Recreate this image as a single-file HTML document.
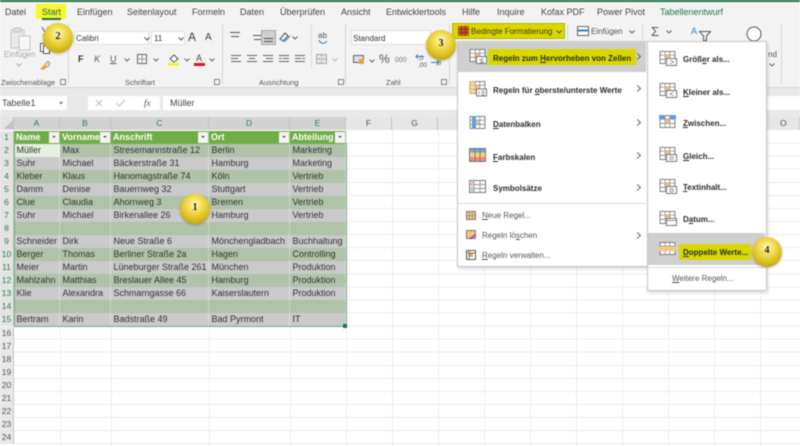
<!DOCTYPE html>
<html lang="de"><head><meta charset="utf-8"><title>Excel</title>
<style>
html,body{margin:0;padding:0}
body{width:800px;height:446px;overflow:hidden;position:relative;background:#fff;font-family:"Liberation Sans",sans-serif;font-size:9px;color:#333}
#w{position:absolute;left:0;top:0;width:800px;height:446px;overflow:hidden;filter:blur(.5px)}
.a{position:absolute;white-space:nowrap}
.bx{position:absolute}
.tab{position:absolute;top:7px;font-size:9px;color:#444;white-space:nowrap;line-height:11px}
.lab{position:absolute;top:78px;font-size:7.5px;color:#555;white-space:nowrap;line-height:10px}
.sep{position:absolute;top:24px;width:1px;height:60px;background:#d6d6d6}
#sheet{position:absolute;left:0;top:117px;width:800px;height:329px;background-color:#fff;
background-image:repeating-linear-gradient(to bottom,transparent 0,transparent 12.07px,#ececec 12.07px,#ececec 13.07px);background-position:0 13.5px}
.v{position:absolute;top:117px;bottom:0;width:1px;background:#eeeeee}
.ch{position:absolute;top:117px;height:13px;background:#e6e6e6;border-right:1px solid #c4c4c4;box-sizing:border-box;text-align:center;font-size:8.5px;line-height:13px;color:#555}
.ch.s{background:#d2d2d2;color:#2f7d4f}
.rows{position:absolute;left:0;top:130.5px;width:346px}
.r{height:13.07px;display:grid;grid-template-columns:14px 46px 51px 98px 81px 56px;font-size:9px;line-height:13px;color:#333}
.r>i{font-style:normal;overflow:visible;white-space:nowrap;padding-left:2.5px;border-right:1px solid rgba(255,255,255,.35);box-sizing:border-box}
.r>b{font-weight:normal;text-align:center;background:#e3e3e3;font-size:8.5px;color:#2f7d4f;border-right:1px solid #c4c4c4;box-sizing:border-box}
.g>i{background:#b0c2a8}.y>i{background:#cacaca}
.h>i{background:#70ad47;color:#fff;font-weight:bold;position:relative;padding-left:2px}
.h>i u{position:absolute;right:0;top:1px;width:10px;height:11px;background:#f3f3f3;text-decoration:none}
.h>i u:after{content:"";position:absolute;left:3px;top:4.5px;border:2px solid transparent;border-top:2.5px solid #555}
.rh{position:absolute;left:0;width:14px;height:13.07px;background:#e8e8e8;text-align:center;font-size:8.5px;line-height:13px;color:#555;border-right:1px solid #c4c4c4;box-sizing:border-box}
.menu{position:absolute;background:#fff;border:1px solid #c6c6c6;box-sizing:border-box;box-shadow:1px 2px 3px rgba(0,0,0,.15)}
.mi{position:absolute;font-size:8px;font-weight:bold;color:#2b2b2b;white-space:nowrap;line-height:11px}
.ms{position:absolute;font-size:8px;color:#555;white-space:nowrap;line-height:11px}
.chev{position:absolute;width:4px;height:4px;border-top:1px solid #666;border-right:1px solid #666;transform:rotate(45deg)}
.badge{position:absolute;width:30px;height:30px;border-radius:50%;background:radial-gradient(circle at 50% 35%,#fff8c0 0,#f3df5a 28%,#dcbf1f 60%,#a88d0c 100%);text-align:center;font:bold 10px/28px "Liberation Serif",serif;color:#222;box-shadow:0 1px 2px rgba(0,0,0,.25)}
svg{position:absolute;overflow:visible}
</style></head><body><div id="w">

<svg width="0" height="0" style="position:absolute"><defs>
<symbol id="g" viewBox="0 0 17 14"><rect x=".5" y=".5" width="16" height="13" fill="#fff" stroke="#777"/><rect x="6" y="4.5" width="5" height="4.5" fill="#f8c67a"/><path d="M.5 4.5H16.5M.5 9H16.5M6 .5V13.5M11 .5V13.5" stroke="#999" fill="none"/></symbol>
<symbol id="sub" viewBox="0 0 11 8"><rect x=".5" y=".5" width="10" height="7" fill="#fff" stroke="#777"/></symbol>
</defs></svg>

<!-- top / tabs -->
<div class="bx" style="left:0;top:0;width:800px;height:1.5px;background:#217346"></div>
<div class="bx" style="left:0;top:1.5px;width:800px;height:20px;background:#f3f3f3"></div>
<div class="bx" style="left:36px;top:4px;width:30px;height:15px;background:#f7f730"></div>
<div class="tab" style="left:5px">Datei</div>
<div class="tab" style="left:42px;color:#1f5f3a">Start</div>
<div class="bx" style="left:42px;top:18px;width:19px;height:1.5px;background:#217346"></div>
<div class="tab" style="left:77px">Einfügen</div>
<div class="tab" style="left:127px">Seitenlayout</div>
<div class="tab" style="left:192px">Formeln</div>
<div class="tab" style="left:240px">Daten</div>
<div class="tab" style="left:280px">Überprüfen</div>
<div class="tab" style="left:341px">Ansicht</div>
<div class="tab" style="left:386px">Entwicklertools</div>
<div class="tab" style="left:462px">Hilfe</div>
<div class="tab" style="left:497px">Inquire</div>
<div class="tab" style="left:541px">Kofax PDF</div>
<div class="tab" style="left:597px">Power Pivot</div>
<div class="tab" style="left:660px;color:#217346">Tabellenentwurf</div>

<!-- ribbon -->
<div class="bx" style="left:0;top:21px;width:800px;height:67px;background:#f3f3f3;border-bottom:1px solid #d6d6d6;box-sizing:border-box"></div>
<div class="sep" style="left:68px"></div><div class="sep" style="left:222px"></div><div class="sep" style="left:345px"></div><div class="sep" style="left:449px"></div><div class="sep" style="left:567px;height:22px"></div><div class="sep" style="left:642px;height:22px"></div><div class="sep" style="left:781px"></div>

<svg style="left:10px;top:27px" width="22" height="24" viewBox="0 0 22 24"><rect x="1" y="3" width="13" height="18" fill="#e9e9e9" stroke="#c4c4c4"/><rect x="4" y="1" width="7" height="4" fill="#ddd" stroke="#c4c4c4"/><rect x="9" y="9" width="11" height="14" fill="#f7f7f7" stroke="#c4c4c4"/></svg>
<div class="a" style="left:4px;top:50px;font-size:8px;color:#aaa">Einfügen</div>
<svg style="left:16px;top:63px" width="6" height="4"><path d="M.5 .5L3 3L5.5 .5" stroke="#aaa" fill="none"/></svg>
<svg style="left:40px;top:43px" width="10" height="11"><rect x=".5" y=".5" width="6" height="8" fill="#fff" stroke="#555"/><rect x="3.5" y="2.5" width="6" height="8" fill="#fff" stroke="#555"/></svg>
<svg style="left:39px;top:60px" width="12" height="11"><path d="M1 9L6 4L9 7L4 10Z" fill="#eda13e"/><path d="M6 4L9 1L11 3L9 7" fill="#ddd" stroke="#777" stroke-width=".6"/></svg>
<svg style="left:41px;top:26px" width="8" height="12"><path d="M1 1L6 10M7 1L2 10" stroke="#2c6fb3" fill="none"/></svg>
<div class="lab" style="left:1px">Zwischenablage</div>
<div class="bx" style="left:60px;top:79px;width:6px;height:6px;border:1px solid #888;box-sizing:border-box"></div>

<div class="bx" style="left:74px;top:31px;width:75px;height:14px;background:#fff;border:1px solid #e0e0e0;box-sizing:border-box"></div>
<div class="a" style="left:76px;top:33px;font-size:8px;color:#333;line-height:11px">Calibri</div>
<svg style="left:144px;top:37px" width="6" height="4"><path d="M.5 .5L3 3L5.5 .5" stroke="#555" fill="none"/></svg>
<div class="bx" style="left:151px;top:31px;width:34px;height:14px;background:#fff;border:1px solid #e0e0e0;box-sizing:border-box"></div>
<div class="a" style="left:154px;top:33px;font-size:8px;color:#333;line-height:11px">11</div>
<svg style="left:178px;top:37px" width="6" height="4"><path d="M.5 .5L3 3L5.5 .5" stroke="#555" fill="none"/></svg>
<div class="a" style="left:188px;top:30px;font-size:12px;color:#444;line-height:14px">A</div><div class="a" style="left:205px;top:32px;font-size:10px;color:#444;line-height:12px">A</div>
<div class="a" style="left:78px;top:54px;font-weight:bold;font-size:9px;color:#333;line-height:11px">F</div>
<div class="a" style="left:94px;top:54px;font-style:italic;font-size:9px;color:#555;line-height:11px">K</div>
<div class="a" style="left:110px;top:54px;text-decoration:underline;font-size:9px;color:#555;line-height:11px">U</div>
<svg style="left:124px;top:58px" width="6" height="4"><path d="M.5 .5L3 3L5.5 .5" stroke="#666" fill="none"/></svg>
<svg style="left:137px;top:54px" width="11" height="11"><rect x=".5" y=".5" width="9" height="9" fill="none" stroke="#666"/><path d="M5 .5V9.5M.5 5H9.5" stroke="#999"/></svg>
<svg style="left:153px;top:58px" width="6" height="4"><path d="M.5 .5L3 3L5.5 .5" stroke="#666" fill="none"/></svg>
<svg style="left:168px;top:53px" width="12" height="13"><path d="M6 2L10 6L6 9L2 6Z" fill="#fff" stroke="#555"/><rect y="10" width="11" height="2.5" fill="#f5f01e"/></svg>
<svg style="left:184px;top:58px" width="6" height="4"><path d="M.5 .5L3 3L5.5 .5" stroke="#666" fill="none"/></svg>
<div class="a" style="left:196px;top:53px;font-size:9px;color:#444;line-height:10px">A</div><div class="bx" style="left:194px;top:63px;width:11px;height:2.5px;background:#e8112d"></div>
<svg style="left:209px;top:58px" width="6" height="4"><path d="M.5 .5L3 3L5.5 .5" stroke="#666" fill="none"/></svg>
<div class="lab" style="left:125px">Schriftart</div>
<div class="bx" style="left:214px;top:79px;width:6px;height:6px;border:1px solid #888;box-sizing:border-box"></div>

<svg style="left:229px;top:30px" width="70" height="14"><path d="M1 2.5H11M2 6.5H10M24 5.5H34M25 9.5H33" stroke="#555" fill="none"/></svg>
<div class="bx" style="left:261px;top:30px;width:15px;height:15px;background:#cfcfcf;border:1px solid #a8a8a8;box-sizing:border-box"></div>
<svg style="left:264px;top:36px" width="10" height="7"><path d="M0 2.5H9M0 5.5H9" stroke="#555"/></svg>
<svg style="left:279px;top:31px" width="12" height="12"><path d="M1 8L6 2L9 5L4 10Z" fill="none" stroke="#555"/><path d="M5 11L11 5" stroke="#2c7fc9"/></svg>
<svg style="left:292px;top:36px" width="6" height="4"><path d="M.5 .5L3 3L5.5 .5" stroke="#666" fill="none"/></svg>
<svg style="left:231px;top:54px" width="76" height="10"><path d="M0 1.5H10M0 4.5H7M0 7.5H10M16 1.5H26M18 4.5H24M16 7.5H26M32 1.5H42M35 4.5H42M32 7.5H42" stroke="#666" fill="none"/><path d="M48 1.5H58M52 4.5H58M48 7.5H58M64 1.5H74M64 4.5H70M64 7.5H74" stroke="#666" fill="none"/><path d="M48 4.5H51M71 4.5H74" stroke="#2c7fc9"/></svg>
<div class="bx" style="left:311px;top:24px;width:1px;height:44px;background:#dcdcdc"></div>
<div class="a" style="left:318px;top:31px;font-size:8px;color:#555;line-height:9px">ab</div>
<svg style="left:318px;top:39px" width="10" height="6"><path d="M1 1C2 5 7 5 9 2" stroke="#2c7fc9" fill="none"/></svg>
<svg style="left:316px;top:54px" width="11" height="10"><rect x=".5" y=".5" width="10" height="9" fill="#e4e4e4" stroke="#aaa"/><path d="M5.5 .5V3M5.5 7V9.5M.5 5H10.5" stroke="#aaa"/></svg>
<svg style="left:332px;top:58px" width="6" height="4"><path d="M.5 .5L3 3L5.5 .5" stroke="#bbb" fill="none"/></svg>
<div class="lab" style="left:259px">Ausrichtung</div>
<div class="bx" style="left:338px;top:79px;width:6px;height:6px;border:1px solid #888;box-sizing:border-box"></div>

<div class="bx" style="left:351px;top:30px;width:80px;height:15px;background:#fff;border:1px solid #e0e0e0;box-sizing:border-box"></div>
<div class="a" style="left:353px;top:33px;font-size:8px;color:#333;line-height:11px">Standard</div>
<svg style="left:353px;top:55px" width="12" height="10"><rect x=".5" y=".5" width="10" height="7" fill="#ddd" stroke="#666"/><rect x="6" y="4" width="5" height="5" fill="#eda13e"/></svg>
<svg style="left:369px;top:59px" width="6" height="4"><path d="M.5 .5L3 3L5.5 .5" stroke="#666" fill="none"/></svg>
<div class="a" style="left:379px;top:53px;font-size:12px;color:#555;line-height:13px">%</div>
<div class="a" style="left:395px;top:56px;font-size:7px;color:#777;line-height:9px">000</div>
<div class="a" style="left:418px;top:55px;font-size:6.5px;color:#555;line-height:7px">,0<br>,00</div>
<div class="a" style="left:436px;top:60px;font-size:6.5px;color:#555;line-height:7px">,0</div>
<svg style="left:415px;top:54px" width="10" height="5"><path d="M9 2.5H1M3 .5L1 2.5L3 4.5" stroke="#2c7fc9" fill="none"/></svg>
<svg style="left:431px;top:60px" width="10" height="5"><path d="M0 2.5H8M6 .5L8 2.5L6 4.5" stroke="#2c7fc9" fill="none"/></svg>
<div class="lab" style="left:386px">Zahl</div>
<div class="bx" style="left:441px;top:79px;width:6px;height:6px;border:1px solid #888;box-sizing:border-box"></div>

<!-- Bedingte Formatierung -->
<div class="bx" style="left:452px;top:23px;width:113px;height:16px;background:#d9d700;border:1px solid #b5b300;box-sizing:border-box"></div>
<svg style="left:458px;top:26px" width="11" height="10"><rect width="11" height="10" fill="#d8541e"/><path d="M0 3.3H11M0 6.6H11M3.6 0V10M7.3 0V10" stroke="#50401a" stroke-width=".8"/></svg>
<div class="a" style="left:471px;top:26px;font-size:8px;color:#3b3b1b;line-height:11px">Bedingte Formatierung</div>
<svg style="left:556px;top:30px" width="6" height="4"><path d="M.5 .5L3 3L5.5 .5" stroke="#555" fill="none"/></svg>
<svg style="left:577px;top:26px" width="12" height="10"><rect x=".5" y=".5" width="11" height="9" fill="#fff" stroke="#666"/><path d="M.5 4.5H11.5" stroke="#2c7fc9" stroke-width="2"/></svg>
<div class="a" style="left:591px;top:26px;font-size:8px;color:#555;line-height:11px">Einfügen</div>
<svg style="left:629px;top:30px" width="6" height="4"><path d="M.5 .5L3 3L5.5 .5" stroke="#666" fill="none"/></svg>
<div class="a" style="left:651px;top:24px;font-size:13px;color:#555;line-height:15px">Σ</div>
<svg style="left:666px;top:30px" width="6" height="4"><path d="M.5 .5L3 3L5.5 .5" stroke="#666" fill="none"/></svg>
<div class="a" style="left:691px;top:26px;font-size:9px;color:#2c7fc9;line-height:10px">A</div>
<svg style="left:699px;top:31px" width="12" height="10"><path d="M.5 .5H11.5L7.5 5V9.5H4.5V5Z" fill="none" stroke="#555"/></svg>
<svg style="left:746px;top:26px" width="16" height="15"><circle cx="8" cy="8" r="7" fill="#fff" stroke="#555"/></svg>
<div class="a" style="left:768px;top:49px;font-size:8px;color:#555;line-height:11px">nd</div>
<svg style="left:769px;top:63px" width="6" height="4"><path d="M.5 .5L3 3L5.5 .5" stroke="#666" fill="none"/></svg>

<!-- formula bar -->
<div class="bx" style="left:0;top:88px;width:800px;height:29px;background:#e8e8e8"></div>
<div class="bx" style="left:0;top:96px;width:67px;height:14px;background:#fff"></div>
<div class="a" style="left:2px;top:98px;font-size:9px;color:#444;line-height:11px">Tabelle1</div>
<svg style="left:59px;top:102px" width="5" height="3"><path d="M0 0H4L2 2.5Z" fill="#777"/></svg>
<div class="bx" style="left:88px;top:96px;width:72px;height:14px;background:#fff"></div>
<svg style="left:95px;top:99px" width="36" height="9"><path d="M1 1L7 7M7 1L1 7" stroke="#bbb" fill="none"/><path d="M21 4L24 7L30 1" stroke="#bbb" fill="none"/></svg>
<div class="a" style="left:144px;top:97px;font:italic 9px/12px 'Liberation Serif',serif;color:#555">fx</div>
<div class="bx" style="left:163px;top:96px;width:637px;height:14px;background:#fff"></div>
<div class="a" style="left:170px;top:98px;font-size:9px;color:#444;line-height:11px">Müller</div>

<!-- sheet -->
<div id="sheet"></div>
<div class="v" style="left:60px"></div><div class="v" style="left:111px"></div><div class="v" style="left:209px"></div><div class="v" style="left:290px"></div><div class="v" style="left:346px"></div><div class="v" style="left:392px"></div><div class="v" style="left:438px"></div><div class="v" style="left:484px"></div><div class="v" style="left:530px"></div><div class="v" style="left:576px"></div><div class="v" style="left:622px"></div><div class="v" style="left:668px"></div><div class="v" style="left:714px"></div><div class="v" style="left:760px"></div>

<div class="ch" style="left:0;width:14px;background:#e3e3e3"></div>
<svg style="left:4px;top:120px" width="9" height="9"><path d="M9 0V9H0Z" fill="#c0c0c0"/></svg>
<div class="ch s" style="left:14px;width:46px">A</div>
<div class="ch s" style="left:60px;width:51px">B</div>
<div class="ch s" style="left:111px;width:98px">C</div>
<div class="ch s" style="left:209px;width:81px">D</div>
<div class="ch s" style="left:290px;width:56px">E</div>
<div class="ch" style="left:346px;width:46px">F</div>
<div class="ch" style="left:392px;width:46px">G</div>
<div class="ch" style="left:438px;width:362px"></div>
<div class="a" style="left:780px;top:117px;font-size:8.5px;color:#555;line-height:13px">O</div>
<div class="bx" style="left:760px;top:117px;width:1px;height:13px;background:#c4c4c4"></div>

<div class="rows">
<div class="r h"><b>1</b><i>Name<u></u></i><i>Vorname<u></u></i><i>Anschrift<u></u></i><i>Ort<u></u></i><i>Abteilung<u></u></i></div>
<div class="r g"><b>2</b><i style="background:#e6f0e0">Müller</i><i>Max</i><i>Stresemannstraße 12</i><i>Berlin</i><i>Marketing</i></div>
<div class="r y"><b>3</b><i>Suhr</i><i>Michael</i><i>Bäckerstraße 31</i><i>Hamburg</i><i>Marketing</i></div>
<div class="r g"><b>4</b><i>Kleber</i><i>Klaus</i><i>Hanomagstraße 74</i><i>Köln</i><i>Vertrieb</i></div>
<div class="r y"><b>5</b><i>Damm</i><i>Denise</i><i>Bauernweg 32</i><i>Stuttgart</i><i>Vertrieb</i></div>
<div class="r g"><b>6</b><i>Clue</i><i>Claudia</i><i>Ahornweg 3</i><i>Bremen</i><i>Vertrieb</i></div>
<div class="r y"><b>7</b><i>Suhr</i><i>Michael</i><i>Birkenallee 26</i><i>Hamburg</i><i>Vertrieb</i></div>
<div class="r g"><b>8</b><i></i><i></i><i></i><i></i><i></i></div>
<div class="r y"><b>9</b><i>Schneider</i><i>Dirk</i><i>Neue Straße 6</i><i>Mönchengladbach</i><i>Buchhaltung</i></div>
<div class="r g"><b>10</b><i>Berger</i><i>Thomas</i><i>Berliner Straße 2a</i><i>Hagen</i><i>Controlling</i></div>
<div class="r y"><b>11</b><i>Meier</i><i>Martin</i><i>Lüneburger Straße 261</i><i>München</i><i>Produktion</i></div>
<div class="r g"><b>12</b><i>Mahlzahn</i><i>Matthias</i><i>Breslauer Allee 45</i><i>Hamburg</i><i>Produktion</i></div>
<div class="r y"><b>13</b><i>Klie</i><i>Alexandra</i><i>Schmarngasse 66</i><i>Kaiserslautern</i><i>Produktion</i></div>
<div class="r g"><b>14</b><i></i><i></i><i></i><i></i><i></i></div>
<div class="r y"><b>15</b><i>Bertram</i><i>Karin</i><i>Badstraße 49</i><i>Bad Pyrmont</i><i>IT</i></div>
</div>
<div class="bx" style="left:14px;top:143px;width:333px;height:184px;border:1px solid #6fae83;border-top:0;box-sizing:border-box"></div>
<div class="bx" style="left:343px;top:324px;width:4px;height:4px;background:#217346"></div>

<div class="rh" style="top:326.6px">16</div><div class="rh" style="top:339.7px">17</div><div class="rh" style="top:352.7px">18</div><div class="rh" style="top:365.8px">19</div><div class="rh" style="top:378.9px">20</div><div class="rh" style="top:392px">21</div><div class="rh" style="top:405px">22</div><div class="rh" style="top:418px">23</div><div class="rh" style="top:431.1px">24</div>

<!-- menu 1 -->
<div class="menu" style="left:457px;top:41px;width:191px;height:226px"></div>
<div class="bx" style="left:458px;top:41px;width:188px;height:31px;background:#cfcfcf"></div>
<div class="bx" style="left:488px;top:49px;width:148px;height:16px;background:#d9d700"></div>
<svg style="left:469px;top:49px" width="18" height="15"><use href="#g" width="17" height="13"/><use href="#sub" x="7" y="7" width="11" height="8"/><path d="M14.5 9L11 11L14.5 12.5M11 13.5H14.5" stroke="#666" fill="none" stroke-width=".7"/></svg>
<div class="mi" style="left:493px;top:53px">Regeln zum <u>H</u>ervorheben von Zellen</div>
<div class="chev" style="left:635px;top:54px"></div>
<svg style="left:469px;top:81px" width="18" height="16"><use href="#g" width="17" height="13"/><rect x="0" y="0" width="6" height="13" fill="#f8c67a" opacity=".7"/><use href="#sub" x="7" y="7" width="11" height="9"/><path d="M10 10V14M13 10H15V14H13Z" stroke="#666" fill="none" stroke-width=".6"/></svg>
<div class="mi" style="left:493px;top:85px">Regeln für <u>o</u>berste/unterste Werte</div>
<div class="chev" style="left:635px;top:86px"></div>
<svg style="left:469px;top:116px" width="17" height="13"><use href="#g" width="17" height="13"/><rect x="3" y="0" width="4" height="13" fill="#5aa0e0"/></svg>
<div class="mi" style="left:493px;top:119px"><u>D</u>atenbalken</div>
<div class="chev" style="left:635px;top:120px"></div>
<svg style="left:469px;top:148px" width="17" height="14"><rect width="17" height="4.5" fill="#6fa8e0"/><rect y="4.5" width="17" height="4.5" fill="#f8d17a"/><rect y="9" width="17" height="4.5" fill="#ef8f7a"/><path d="M.5 .5H16.5V13.5H.5ZM6 .5V13.5M11 .5V13.5" fill="none" stroke="#777"/></svg>
<div class="mi" style="left:493px;top:152px"><u>F</u>arbskalen</div>
<div class="chev" style="left:635px;top:153px"></div>
<svg style="left:469px;top:180px" width="17" height="13"><rect x=".5" y=".5" width="16" height="12" fill="#fff" stroke="#777"/><path d="M.5 4.5H16.5M.5 8.5H16.5M5 .5V12.5M11 .5V12.5" stroke="#999"/><path d="M2 2.5H4" stroke="#d44"/><path d="M2 6.5H4" stroke="#e9a33c"/><path d="M2 10.5H4" stroke="#2c7fc9"/></svg>
<div class="mi" style="left:493px;top:183px">Symbolsätze</div>
<div class="chev" style="left:635px;top:185px"></div>
<div class="bx" style="left:458px;top:203px;width:188px;height:1px;background:#d8d8d8"></div>
<svg style="left:466px;top:211px" width="10" height="9"><rect x=".5" y=".5" width="9" height="8" fill="#f8c67a" stroke="#777"/><path d="M3.5 .5V8.5M6.5 .5V8.5M.5 4.5H9.5" stroke="#999"/></svg>
<div class="ms" style="left:482px;top:210px"><u>N</u>eue Regel...</div>
<svg style="left:466px;top:230px" width="11" height="10"><rect x=".5" y=".5" width="9" height="8" fill="#f8c67a" stroke="#777"/><path d="M4 9L9 5" stroke="#a550b8" stroke-width="2"/></svg>
<div class="ms" style="left:482px;top:230px">Regeln lö<u>s</u>chen</div>
<div class="chev" style="left:635px;top:233px"></div>
<svg style="left:466px;top:250px" width="10" height="10"><rect x=".5" y=".5" width="9" height="9" fill="#fff" stroke="#555"/><rect x="3" y="3" width="4" height="4" fill="#f0a040"/><path d="M.5 3H9.5M3 .5V9.5" stroke="#777"/></svg>
<div class="ms" style="left:482px;top:250px"><u>R</u>egeln verwalten...</div>

<!-- menu 2 -->
<div class="menu" style="left:647px;top:41px;width:120px;height:250px"></div>
<svg style="left:659px;top:51px" width="18" height="15"><use href="#g" width="17" height="13"/><use href="#sub" x="7" y="7" width="11" height="8"/><path d="M11 9L14.5 11L11 13" stroke="#666" fill="none" stroke-width=".7"/></svg>
<div class="mi" style="left:683px;top:54px">Größ<u>e</u>r als...</div>
<svg style="left:659px;top:83px" width="18" height="15"><use href="#g" width="17" height="13"/><use href="#sub" x="7" y="7" width="11" height="8"/><path d="M14.5 9L11 11L14.5 13" stroke="#666" fill="none" stroke-width=".7"/></svg>
<div class="mi" style="left:683px;top:87px"><u>K</u>leiner als...</div>
<svg style="left:659px;top:115px" width="17" height="13"><use href="#g" width="17" height="13"/><rect width="6" height="4" fill="#5aa0e0"/><rect x="11" width="6" height="4" fill="#5aa0e0"/></svg>
<div class="mi" style="left:683px;top:118px"><u>Z</u>wischen...</div>
<svg style="left:659px;top:147px" width="18" height="15"><use href="#g" width="17" height="13"/><use href="#sub" x="7" y="7" width="11" height="8"/><path d="M10 9.5H15M10 11H15M10 12.5H15" stroke="#666" fill="none" stroke-width=".6"/></svg>
<div class="mi" style="left:683px;top:151px"><u>G</u>leich...</div>
<svg style="left:659px;top:179px" width="18" height="15"><use href="#g" width="17" height="13"/><use href="#sub" x="7" y="7" width="11" height="8"/><circle cx="12.5" cy="11.2" r="1.6" fill="none" stroke="#666" stroke-width=".7"/></svg>
<div class="mi" style="left:683px;top:182px"><u>T</u>extinhalt...</div>
<svg style="left:659px;top:211px" width="18" height="15"><use href="#g" width="17" height="13"/><use href="#sub" x="7" y="7" width="11" height="8"/><path d="M7 9.5H18" stroke="#777" stroke-width=".8"/></svg>
<div class="mi" style="left:683px;top:214px">D<u>a</u>tum...</div>
<div class="bx" style="left:648px;top:233px;width:117px;height:32px;background:#cfcfcf"></div>
<div class="bx" style="left:679px;top:244px;width:72px;height:16px;background:#d9d700"></div>
<svg style="left:659px;top:242px" width="17" height="13"><use href="#g" width="17" height="13"/><rect y="4.5" width="17" height="4.5" fill="#f8c67a"/></svg>
<div class="mi" style="left:683px;top:247px"><u>D</u>oppelte Werte...</div>
<div class="bx" style="left:648px;top:267px;width:117px;height:1px;background:#d8d8d8"></div>
<div class="ms" style="left:672px;top:273px"><u>W</u>eitere Regeln...</div>

<!-- badges -->
<div class="badge" style="left:180px;top:194px">1</div>
<div class="badge" style="left:43px;top:23px">2</div>
<div class="badge" style="left:426px;top:30px">3</div>
<div class="badge" style="left:752px;top:237px">4</div>
</div></body></html>
